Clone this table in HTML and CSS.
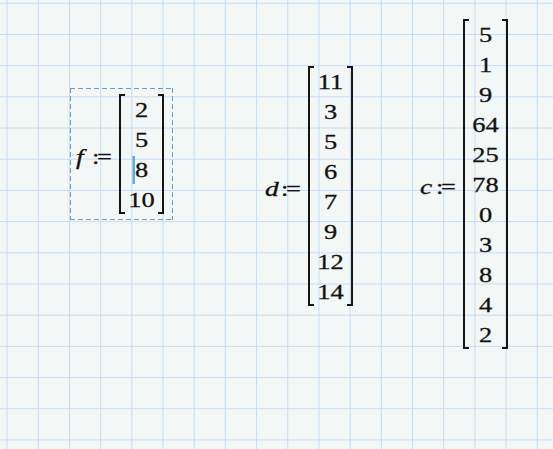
FILE: index.html
```html
<!DOCTYPE html>
<html>
<head>
<meta charset="utf-8">
<link rel="stylesheet" href="styles.css">
</head>
<body>
<div class="sheet">
  <div class="region region-f selected">
    <span class="lbl"><i class="var">f</i><span class="def">:=</span></span>
    <div class="matrix">
      <span class="br l"></span>
      <div class="cells">
        <span>2</span><span>5</span><span class="has-cur"><span class="cursor"></span>8</span><span>10</span>
      </div>
      <span class="br r"></span>
    </div>
  </div>

  <div class="region region-d">
    <span class="lbl"><i class="var">d</i><span class="def">:=</span></span>
    <div class="matrix">
      <span class="br l"></span>
      <div class="cells">
        <span>11</span><span>3</span><span>5</span><span>6</span><span>7</span><span>9</span><span>12</span><span>14</span>
      </div>
      <span class="br r"></span>
    </div>
  </div>

  <div class="region region-c">
    <span class="lbl"><i class="var">c</i><span class="def">:=</span></span>
    <div class="matrix">
      <span class="br l"></span>
      <div class="cells">
        <span>5</span><span>1</span><span>9</span><span>64</span><span>25</span><span>78</span><span>0</span><span>3</span><span>8</span><span>4</span><span>2</span>
      </div>
      <span class="br r"></span>
    </div>
  </div>
</div>
</body>
</html>
```
FILE: styles.css
```css
html, body {
  margin: 0;
  padding: 0;
}
body {
  width: 553px;
  height: 449px;
  overflow: hidden;
  background-color: #f3f7f5;
}
.sheet {
  position: relative;
  width: 553px;
  height: 449px;
  background-image:
    linear-gradient(to right, #c3ddf6 1.2px, transparent 1.2px),
    linear-gradient(to bottom, #c3ddf6 1.2px, transparent 1.2px);
  background-size: 31.2px 31.2px;
  background-position: 6.6px 2.8px;
}
.region {
  position: absolute;
  display: flex;
  align-items: center;
  font-family: "Liberation Serif", "Times New Roman", serif;
  font-size: 22px;
  color: #111;
  -webkit-text-stroke: 0.3px #111;
}
.region-f {
  left: 70px;
  top: 88px;
  padding: 6px 9px 6px 6px;
  background:
    repeating-linear-gradient(to right, #6f9cbc 0 5px, transparent 5px 8px) top left / 100% 1px no-repeat,
    repeating-linear-gradient(to right, #6f9cbc 0 5px, transparent 5px 8px) bottom left / 100% 1px no-repeat,
    repeating-linear-gradient(to bottom, #6f9cbc 0 5px, transparent 5px 8px) top left / 1px 100% no-repeat,
    repeating-linear-gradient(to bottom, #6f9cbc 0 5px, transparent 5px 8px) top right / 1px 100% no-repeat;
}
.region-d {
  left: 265px;
  top: 66px;
}
.region-c {
  left: 420px;
  top: 19px;
}
.lbl {
  display: flex;
  align-items: baseline;
  justify-content: space-between;
  width: 36px;
  margin-right: 7px;
  position: relative;
  top: 3px;
}
.var {
  display: inline-block;
  font-style: italic;
  font-size: 22px;
  transform: scaleX(1.25);
  transform-origin: left center;
}
.def {
  display: inline-block;
  font-size: 22px;
  letter-spacing: -2px;
  transform: scaleX(1.2);
  transform-origin: right center;
  margin-right: 2px;
}
.matrix {
  display: flex;
  align-items: stretch;
}
.br {
  width: 4px;
  border: 2px solid #161616;
}
.br.l {
  border-right: 0;
}
.br.r {
  border-left: 0;
}
.cells {
  display: flex;
  flex-direction: column;
  width: 33px;
}
.cells > span {
  display: block;
  height: 30px;
  line-height: 30px;
  text-align: center;
  position: relative;
  top: 1px;
  transform: scaleX(1.2);
}
.has-cur .cursor {
  position: absolute;
  left: 9px;
  top: 1px;
  width: 1.7px;
  height: 28px;
  background: #5ea3ea;
}
```
